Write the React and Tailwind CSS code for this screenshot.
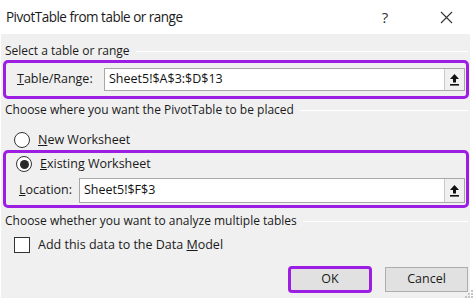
import React from "react";

const font = { fontFamily: '"Open Sans", "Noto Sans", sans-serif' };

function UploadIcon() {
  return (
    <svg width="11" height="13" viewBox="0 0 11 13">
      <path d="M5.5 1 L10 6 L7 6 L7 9.5 L4 9.5 L4 6 L1 6 Z" fill="#111" />
      <rect x="1" y="11" width="9" height="1.6" fill="#111" />
    </svg>
  );
}

function RefInput({ value, className }) {
  return (
    <div className={"flex border border-[#a8a8a8] bg-white " + className}>
      <div className="flex flex-1 items-center pl-[4px] text-[12.5px] text-[#111]">{value}</div>
      <div className="flex w-[20px] items-center justify-center border-l border-[#c8c8c8] bg-[#f0f0f0]">
        <UploadIcon />
      </div>
    </div>
  );
}

function SectionHeader({ children, className }) {
  return (
    <div className={"flex items-center h-[18px] " + className}>
      <span className="pl-[4px] pr-[6px] text-[12px] text-[#1a1a1a] whitespace-nowrap">{children}</span>
      <div className="flex-1 h-[1px] bg-[#dcdcdc] border-b border-white mr-[2px]" />
    </div>
  );
}

function Radio({ checked }) {
  return (
    <div className="flex h-[16px] w-[16px] items-center justify-center rounded-full border border-[#333] bg-white">
      {checked && <div className="h-[9px] w-[9px] rounded-full bg-[#2a2a2a]" />}
    </div>
  );
}

export default function App() {
  return (
    <div className="w-[474px] h-[303px] bg-white overflow-hidden flex flex-col" style={font}>
      <div className="h-[34px] flex items-center bg-white">
        <span className="pl-[6px] text-[13.5px] tracking-[-0.5px] text-[#1a1a1a] flex-1 scale-y-[1.08] origin-left">PivotTable from table or range</span>
        <span className="text-[15px] text-[#333] w-[20px] text-center mr-[45px]">?</span>
        <svg width="13" height="13" viewBox="0 0 13 13" className="mr-[21px]">
          <path d="M1 1 L12 12 M12 1 L1 12" stroke="#333" strokeWidth="1.1" />
        </svg>
      </div>
      <div className="relative ml-[1px] mr-[4px] h-[264px] bg-[#f0f0f0] flex flex-col">
        <SectionHeader className="mt-[8px]">Select a table or range</SectionHeader>
        <div className="ml-[2px] mr-[1px] h-[39px] rounded-[5px] border-[3px] border-[#9d1ee3] flex items-center pl-[11px] pr-[1px]">
          <span className="w-[87px] text-[12.5px] text-[#1a1a1a]"><u>T</u>able/Range:</span>
          <RefInput value="Sheet5!$A$3:$D$13" className="flex-1 h-[23px]" />
        </div>
        <SectionHeader className="mt-[2px]">Choose where you want the PivotTable to be placed</SectionHeader>
        <div className="flex items-center h-[22px] mt-[10px] pl-[13px]">
          <Radio />
          <span className="ml-[8px] text-[12.5px] text-[#1a1a1a]"><u>N</u>ew Worksheet</span>
        </div>
        <div className="ml-[2px] mr-[1px] mt-[-1px] h-[58px] rounded-[5px] border-[3px] border-[#9d1ee3] flex flex-col pl-[10px] pr-[1px]">
          <div className="flex items-center h-[22px] shrink-0">
            <Radio checked />
            <span className="ml-[8px] text-[12.5px] text-[#1a1a1a]"><u>E</u>xisting Worksheet</span>
          </div>
          <div className="flex items-center mt-[3px]">
            <span className="w-[63px] pl-[3px] text-[12.5px] text-[#1a1a1a]"><u>L</u>ocation:</span>
            <RefInput value="Sheet5!$F$3" className="flex-1 h-[25px]" />
          </div>
        </div>
        <SectionHeader className="mt-[4px]">Choose whether you want to analyze multiple tables</SectionHeader>
        <div className="flex items-center h-[22px] mt-[4px] pl-[13px]">
          <div className="h-[16px] w-[16px] border border-[#333] bg-white" />
          <span className="ml-[8px] text-[12.5px] text-[#1a1a1a]">Add this data to the Data <u>M</u>odel</span>
        </div>
        <div className="flex justify-end items-center mt-[10px] pr-[2px]">
          <div className="h-[27px] w-[84px] rounded-[4px] border-[3px] border-[#9d1ee3] bg-[#e1e1e1] flex items-center justify-center text-[12.5px] text-[#1a1a1a]">
            OK
          </div>
          <div className="ml-[13px] h-[25px] w-[83px] border border-[#adadad] bg-[#e1e1e1] flex items-center justify-center text-[12.5px] text-[#1a1a1a]">
            Cancel
          </div>
        </div>
        <svg width="8" height="8" viewBox="0 0 8 8" className="absolute right-[-3px] bottom-[0px]">
          <rect x="6" y="0" width="2" height="2" fill="#c4c4c4" />
          <rect x="3" y="3" width="2" height="2" fill="#c4c4c4" />
          <rect x="6" y="3" width="2" height="2" fill="#c4c4c4" />
          <rect x="0" y="6" width="2" height="2" fill="#c4c4c4" />
          <rect x="3" y="6" width="2" height="2" fill="#c4c4c4" />
          <rect x="6" y="6" width="2" height="2" fill="#c4c4c4" />
        </svg>
      </div>
    </div>
  );
}
